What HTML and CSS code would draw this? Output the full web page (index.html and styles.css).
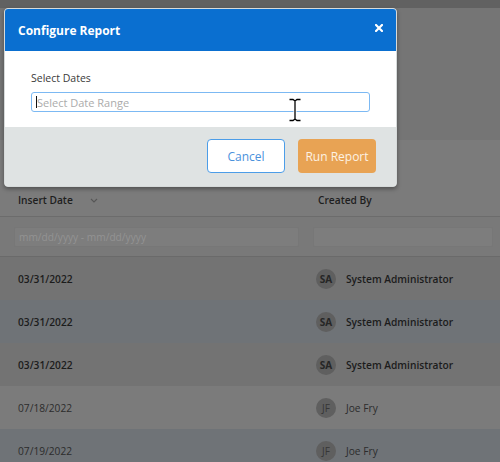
FILE: index.html
```html
<!DOCTYPE html>
<html>
<head>
<meta charset="utf-8">
<link rel="stylesheet" href="styles.css">
</head>
<body>
<div class="app">
  <div class="chrome"></div>
  <div class="toolbar"></div>
  <div class="grid">
    <div class="grid-head">
      <div class="hcell">Insert Date <svg class="chev" width="8" height="5" viewBox="0 0 8 5"><path d="M1 1 L4 4 L7 1" fill="none" stroke="#575757" stroke-width="1.1"/></svg></div>
      <div class="hcell">Created By</div>
    </div>
    <div class="grid-filter">
      <div class="fcell"><div class="finput">mm/dd/yyyy - mm/dd/yyyy</div></div>
      <div class="fcell"><div class="finput"></div></div>
    </div>
    <div class="row r-grey strong">
      <div class="cell">03/31/2022</div>
      <div class="cell user"><span class="avatar">SA</span>System Administrator</div>
    </div>
    <div class="row r-blue strong">
      <div class="cell">03/31/2022</div>
      <div class="cell user"><span class="avatar">SA</span>System Administrator</div>
    </div>
    <div class="row r-grey strong">
      <div class="cell">03/31/2022</div>
      <div class="cell user"><span class="avatar">SA</span>System Administrator</div>
    </div>
    <div class="row r-light">
      <div class="cell">07/18/2022</div>
      <div class="cell user"><span class="avatar">JF</span>Joe Fry</div>
    </div>
    <div class="row r-blue">
      <div class="cell">07/19/2022</div>
      <div class="cell user"><span class="avatar">JF</span>Joe Fry</div>
    </div>
  </div>

  <div class="modal">
    <div class="modal-head">
      <span class="modal-title">Configure Report</span>
      <svg class="close" width="8" height="8" viewBox="0 0 8 8"><path d="M1 1 L7 7 M7 1 L1 7" stroke="#fff" stroke-width="2.2" stroke-linecap="square"/></svg>
    </div>
    <div class="modal-body">
      <div class="label">Select Dates</div>
      <div class="date-input"><span class="caret"></span><span class="ph">Select Date Range</span></div>
    </div>
    <div class="modal-foot">
      <button class="btn btn-cancel">Cancel</button>
      <button class="btn btn-run">Run Report</button>
    </div>
  </div>

  <svg class="ibeam" width="14" height="24" viewBox="0 0 14 24">
    <path d="M1.5 1.5 H5 L7 3 L9 1.5 H12.5 M7 3 V21 M1.5 22.5 H5 L7 21 L9 22.5 H12.5" fill="none" stroke="#fff" stroke-width="3"/>
    <path d="M1.5 1.5 H5 L7 3 L9 1.5 H12.5 M7 3 V21 M1.5 22.5 H5 L7 21 L9 22.5 H12.5" fill="none" stroke="#000" stroke-width="1.3"/>
  </svg>
</div>
</body>
</html>
```

FILE: styles.css
```css
html, body {
  margin: 0;
  padding: 0;
}
body {
  width: 500px;
  height: 462px;
  overflow: hidden;
  font-family: "Open Sans", "Noto Sans", sans-serif;
  background: #737373;
}
.app {
  position: relative;
  width: 500px;
  height: 462px;
  overflow: hidden;
}
.chrome {
  height: 8px;
  background: #616161;
}
.toolbar {
  height: 132px;
  background: #757575;
}
.grid {
  background: #7b7b7b;
}
.grid-head,
.grid-filter,
.row {
  display: grid;
  grid-template-columns: 299px 1fr;
  padding-left: 7px;
}
.grid-head {
  height: 77px;
  align-items: end;
  box-sizing: border-box;
  padding-bottom: 8px;
  border-bottom: 1px solid #6c6c6c;
}
.hcell {
  padding: 0 7px 0 11px;
  font-size: 10.2px;
  line-height: 16px;
  font-weight: 600;
  color: #1e1e1e;
  display: flex;
  align-items: center;
}
.hcell + .hcell {
  padding-left: 12px;
}
.chev {
  margin-left: 17px;
}
.grid-filter {
  height: 40px;
  box-sizing: border-box;
  padding-top: 10px;
  background: #797979;
  border-bottom: 1px solid #6a6a6a;
}
.fcell {
  padding: 0 7px;
}
.finput {
  height: 20px;
  box-sizing: border-box;
  border: 1px solid #777777;
  border-radius: 2px;
  background: #7d7d7d;
  font-size: 10.2px;
  line-height: 18px;
  padding-left: 4px;
  color: #939393;
  white-space: nowrap;
}
.row {
  height: 43px;
  align-items: center;
  font-size: 10.2px;
  color: #2c2c2c;
}
.row.strong {
  font-weight: 600;
  color: #1c1c1c;
}
.r-grey { background: #737373; }
.r-blue { background: #6f7377; }
.r-light { background: #7b7b7b; }
.cell {
  padding: 0 7px 0 11px;
}
.cell.user {
  display: flex;
  align-items: center;
  padding-left: 10px;
}
.avatar {
  width: 20px;
  height: 20px;
  border-radius: 50%;
  background: #5f5f5f;
  display: inline-flex;
  align-items: center;
  justify-content: center;
  font-size: 10px;
  font-weight: 700;
  color: #262626;
  margin-right: 10px;
}
.row:not(.strong) .avatar {
  font-weight: 400;
  color: #363636;
}

/* modal */
.modal {
  position: absolute;
  left: 4px;
  top: 8px;
  width: 393px;
  box-sizing: border-box;
  border: 1px solid #d6dada;
  border-radius: 4px;
  overflow: hidden;
  background: #fff;
  box-shadow: 0 2px 4px rgba(0, 0, 0, 0.35);
}
.modal-head {
  height: 42px;
  background: #0a6fd0;
  display: flex;
  align-items: center;
  justify-content: space-between;
  padding: 0 13px;
}
.modal-title {
  color: #fff;
  font-weight: 700;
  font-size: 12px;
  line-height: 16px;
  margin-top: 2px;
}
.close {
  align-self: flex-start;
  margin-top: 15px;
}
.modal-body {
  padding: 20px 26px 15px;
}
.label {
  font-size: 10.5px;
  line-height: 14px;
  color: #3a3a3a;
  margin-bottom: 7px;
}
.date-input {
  height: 20px;
  box-sizing: border-box;
  border: 1px solid #7cb9f3;
  border-radius: 3px;
  padding-left: 4px;
  display: flex;
  align-items: center;
  font-size: 11px;
  color: #ababab;
}
.caret {
  width: 1px;
  height: 12px;
  background: #111;
}
.modal-foot {
  background: #dfe3e3;
  padding: 12px 20px 13px;
  display: flex;
  justify-content: flex-end;
  gap: 13px;
}
.btn {
  height: 34px;
  width: 78px;
  box-sizing: border-box;
  border-radius: 4px;
  font-family: "Open Sans", "Noto Sans", sans-serif;
  font-size: 12px;
  padding: 0;
}
.btn-cancel {
  background: #fff;
  border: 1px solid #4c9de8;
  color: #4a92dc;
}
.btn-run {
  background: #e8a354;
  border: none;
  color: #fdf2e3;
}
.ibeam {
  position: absolute;
  left: 288px;
  top: 98px;
}
```
